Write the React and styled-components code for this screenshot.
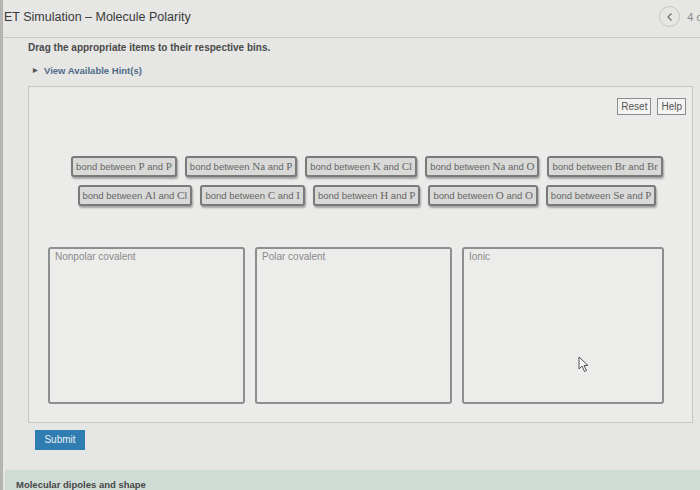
import React from 'react';
import styled, { createGlobalStyle } from 'styled-components';

const GlobalStyle = createGlobalStyle`
  *, *::before, *::after {
    box-sizing: border-box;
  }
  body {
    margin: 0;
    background: #e6e6e4;
    font-family: "Liberation Sans", Arial, sans-serif;
  }
`;

const rowOne = [
  ['P', 'P'],
  ['Na', 'P'],
  ['K', 'Cl'],
  ['Na', 'O'],
  ['Br', 'Br']
];

const rowTwo = [
  ['Al', 'Cl'],
  ['C', 'I'],
  ['H', 'P'],
  ['O', 'O'],
  ['Se', 'P']
];

const bins = [
  { label: 'Nonpolar covalent', width: 197 },
  { label: 'Polar covalent', width: 197 },
  { label: 'Ionic', width: 202, cursor: true }
];

function Chip({ a, b }) {
  return (
    <ChipBox>
      bond between <Sym>{a}</Sym> and <Sym>{b}</Sym>
    </ChipBox>
  );
}

export default function App() {
  return (
    <Page>
      <GlobalStyle />
      <Header>
        <Title>ET Simulation – Molecule Polarity</Title>
        <Nav>
          <BackButton>
            <svg width="10" height="10" viewBox="0 0 10 10">
              <path d="M6.5 1.5 L3 5 L6.5 8.5" fill="none" stroke="#777" strokeWidth="1.4" />
            </svg>
          </BackButton>
          <PageCount>4 c</PageCount>
        </Nav>
      </Header>
      <Content>
        <Instruction>Drag the appropriate items to their respective bins.</Instruction>
        <Hint>
          <Caret>▶</Caret>View Available Hint(s)
        </Hint>
        <DragArea>
          <Tools>
            <ToolButton>Reset</ToolButton>
            <ToolButton>Help</ToolButton>
          </Tools>
          <ChipRows>
            <ChipRow>
              {rowOne.map(([a, b], i) => <Chip key={i} a={a} b={b} />)}
            </ChipRow>
            <ChipRow>
              {rowTwo.map(([a, b], i) => <Chip key={i} a={a} b={b} />)}
            </ChipRow>
          </ChipRows>
          <Bins>
            {bins.map((bin) => (
              <Bin key={bin.label} $w={bin.width}>
                <BinLabel>{bin.label}</BinLabel>
                {bin.cursor && (
                  <Cursor width="12" height="17" viewBox="0 0 12 17">
                    <path d="M1 1 L1 13 L4 10 L6.5 15.5 L8.5 14.5 L6 9.5 L10 9.5 Z" fill="#f4f4f4" stroke="#555" strokeWidth="1" />
                  </Cursor>
                )}
              </Bin>
            ))}
          </Bins>
        </DragArea>
        <Submit>Submit</Submit>
      </Content>
      <Footer>Molecular dipoles and shape</Footer>
    </Page>
  );
}

const Page = styled.div`
  width: 700px;
  height: 490px;
  border-left: 3px solid #b4b4b2;
  display: flex;
  flex-direction: column;
  overflow: hidden;
`;

const Header = styled.div`
  height: 38px;
  flex-shrink: 0;
  padding-bottom: 4px;
  border-bottom: 1px solid #cacac8;
  display: flex;
  align-items: center;
  justify-content: space-between;
`;

const Title = styled.div`
  font-size: 12.5px;
  color: #3a3a3a;
  padding-left: 1px;
`;

const Nav = styled.div`
  display: flex;
  align-items: center;
  gap: 7px;
  margin-right: -2px;
`;

const BackButton = styled.div`
  width: 21px;
  height: 21px;
  border: 1px solid #c4c4c2;
  border-radius: 50%;
  display: flex;
  align-items: center;
  justify-content: center;
`;

const PageCount = styled.span`
  font-size: 11px;
  color: #888;
`;

const Content = styled.div`
  padding-left: 25px;
  display: flex;
  flex-direction: column;
  align-items: flex-start;
`;

const Instruction = styled.div`
  margin-top: 3px;
  line-height: 13px;
  font-size: 10px;
  font-weight: bold;
  color: #4a4a4a;
`;

const Hint = styled.div`
  margin-top: 10px;
  line-height: 13px;
  font-size: 9.5px;
  font-weight: bold;
  color: #4f6c88;
  display: flex;
  align-items: center;
`;

const Caret = styled.span`
  font-size: 6px;
  color: #555;
  margin: 0 6px 0 5px;
`;

const DragArea = styled.div`
  margin-top: 9px;
  width: 665px;
  height: 337px;
  padding: 11px 6px 0 19px;
  border: 1px solid #c6c6c4;
  background: #ebebea;
  display: flex;
  flex-direction: column;
`;

const Tools = styled.div`
  display: flex;
  justify-content: flex-end;
  gap: 6px;
`;

const ToolButton = styled.div`
  height: 17px;
  padding: 0 3px;
  border: 1px solid #8c8c8c;
  background: #f3f3f2;
  font-size: 10px;
  line-height: 15px;
  color: #555;
`;

const ChipRows = styled.div`
  margin-top: 41px;
  display: flex;
  flex-direction: column;
  gap: 8px;
`;

const ChipRow = styled.div`
  display: flex;
  justify-content: center;
  gap: 8px;
`;

const ChipBox = styled.div`
  height: 21px;
  padding: 0 3px;
  border: 2px solid #7a7a7a;
  border-radius: 3px;
  background: #d9d9d8;
  box-shadow: 1px 2px 2px rgba(0, 0, 0, 0.3);
  font-family: "Liberation Sans", Arial, sans-serif;
  font-size: 9.5px;
  line-height: 17px;
  color: #666;
  white-space: nowrap;
`;

const Sym = styled.span`
  font-family: "Liberation Serif", "Times New Roman", serif;
  font-size: 11px;
`;

const Bins = styled.div`
  margin-top: 41px;
  display: flex;
  gap: 10px;
`;

const Bin = styled.div`
  position: relative;
  width: ${(p) => p.$w}px;
  height: 157px;
  border: 2px solid #8e8e8e;
  border-radius: 3px;
  background: #ececeb;
`;

const BinLabel = styled.div`
  padding: 2px 5px;
  font-size: 10px;
  color: #8a8a8a;
`;

const Cursor = styled.svg`
  position: absolute;
  left: 114px;
  top: 107px;
`;

const Submit = styled.div`
  margin: 7px 0 0 7px;
  width: 50px;
  height: 20px;
  background: #2f7db1;
  color: #e8f1f7;
  font-size: 10px;
  line-height: 20px;
  text-align: center;
`;

const Footer = styled.div`
  margin: 20px 0 0 2px;
  flex: 1;
  background: #cfdcd6;
  padding: 9px 0 0 11px;
  font-size: 9.5px;
  font-weight: bold;
  color: #474747;
`;
